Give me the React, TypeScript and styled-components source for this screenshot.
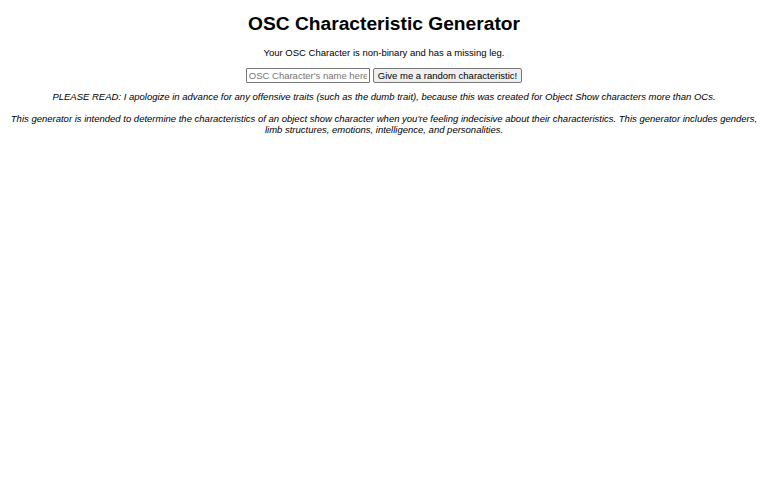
import styled, { createGlobalStyle } from 'styled-components';

const GlobalStyle = createGlobalStyle`
  body {
    margin: 0;
    background: #fff;
    font-family: "Liberation Sans", Arial, sans-serif;
    color: #000;
  }
`;

const Page = styled.div`
  display: flex;
  flex-direction: column;
  align-items: center;
  padding: 13px 8px;
  text-align: center;
  font-size: 9.5px;
  line-height: 11px;
`;

const Title = styled.h1`
  font-size: 19.2px;
  line-height: 22px;
  font-weight: bold;
  margin: 0 0 12px;
`;

const Result = styled.p`
  margin: 0 0 10px;
`;

const Form = styled.div`
  display: flex;
  gap: 3px;
  margin-bottom: 8px;
`;

const NameInput = styled.input`
  width: 124px;
  height: 15px;
  box-sizing: border-box;
  padding: 0 2px;
  border: 1px solid #767676;
  border-radius: 1px;
  font-family: inherit;
  font-size: 9.5px;
  color: #000;
  &::placeholder {
    color: #757575;
  }
`;

const Button = styled.button`
  height: 15px;
  box-sizing: border-box;
  padding: 0 4px;
  border: 1px solid #767676;
  border-radius: 2px;
  background: #efefef;
  font-family: inherit;
  font-size: 9.5px;
  color: #000;
`;

const Note = styled.p`
  font-style: italic;
  margin: 0 0 11px;
`;

export default function App() {
  return (
    <>
      <GlobalStyle />
      <Page>
        <Title>OSC Characteristic Generator</Title>
        <Result>Your OSC Character is non-binary and has a missing leg.</Result>
        <Form>
          <NameInput placeholder="OSC Character's name here" />
          <Button>Give me a random characteristic!</Button>
        </Form>
        <Note>
          PLEASE READ: I apologize in advance for any offensive traits (such as the dumb trait), because this was
          created for Object Show characters more than OCs.
        </Note>
        <Note>
          This generator is intended to determine the characteristics of an object show character when you're feeling
          indecisive about their characteristics. This generator includes genders, limb structures, emotions,
          intelligence, and personalities.
        </Note>
      </Page>
    </>
  );
}
